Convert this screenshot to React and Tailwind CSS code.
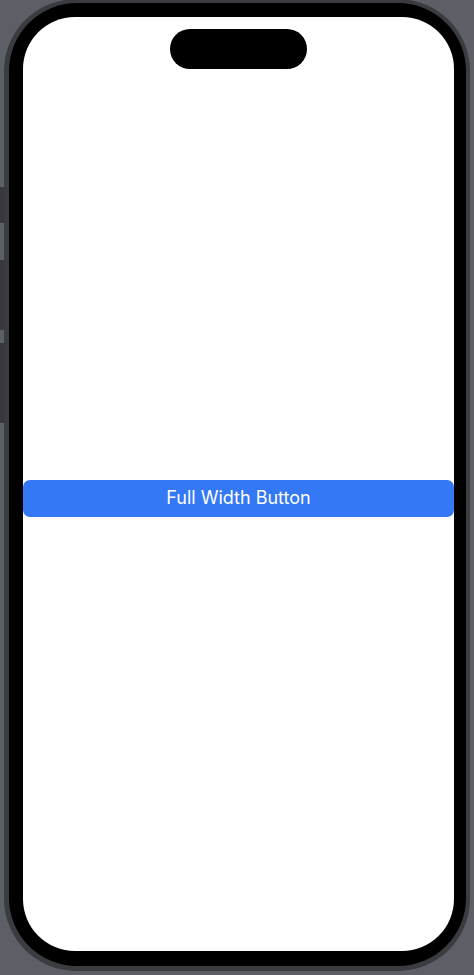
export default function App() {
  return (
    <div className="relative w-[474px] h-[975px] overflow-hidden bg-[#5c6066]">
      {/* side buttons on the left edge of the device */}
      <div className="absolute left-0 top-[187px] w-[5px] h-[36px] rounded-r-[2px] bg-[#36383b]" />
      <div className="absolute left-0 top-[260px] w-[5px] h-[70px] rounded-r-[2px] bg-[#36383b]" />
      <div className="absolute left-0 top-[343px] w-[5px] h-[80px] rounded-r-[2px] bg-[#36383b]" />

      {/* device frame */}
      <div className="ml-[4px] mt-[-1px] w-[466px] h-[972px] rounded-[72px] bg-[#3b3c3f] pt-[4px] pb-[5px] pl-[5px] pr-[4px]">
        <div className="w-full h-full rounded-[68px] bg-black pt-[14px] pb-[15px] pl-[14px] pr-[12px]">
          <div className="relative w-full h-full rounded-[52px] bg-white flex flex-col items-stretch justify-center overflow-hidden">
            {/* dynamic island */}
            <div className="absolute left-[147px] top-[12px] w-[137px] h-[40px] rounded-full bg-black" />

            <button
              className="h-[37px] w-full rounded-[7px] bg-[#3478f6] text-white text-[18px] leading-none mt-[28px]"
              style={{ fontFamily: "Inter, 'Noto Sans', sans-serif" }}
            >
              Full Width Button
            </button>
          </div>
        </div>
      </div>
    </div>
  );
}
